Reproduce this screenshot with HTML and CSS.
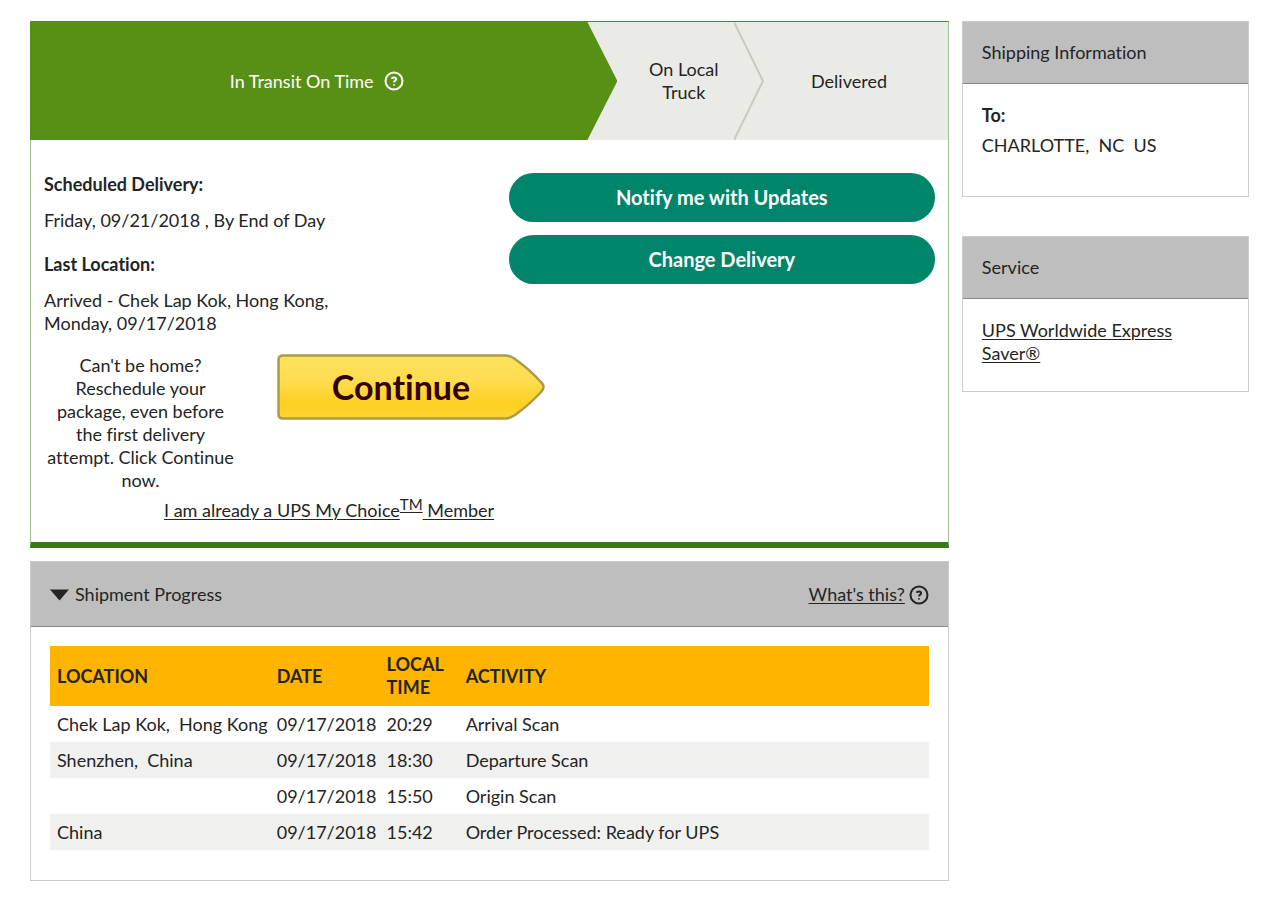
FILE: index.html
```html
<!DOCTYPE html>
<html lang="en">
<head>
<meta charset="utf-8">
<meta name="viewport" content="width=device-width, initial-scale=1">
<title>Tracking Detail</title>
<link rel="stylesheet" href="styles.css">
</head>
<body>
<div class="page">
  <main class="main">
    <section class="status">
      <ol class="steps">
        <li class="step step-current">
          <span>In Transit On Time</span>
          <button class="help" type="button" aria-label="Help with status">
            <svg class="help-icon" viewBox="0 0 20 20" aria-hidden="true"><circle cx="10" cy="10" r="8.5"/><path d="M7.7 7.8C8 6.2 12.1 6.1 12.1 8.2C12.1 9.7 10.1 9.6 10 11.4M10 13.2V14.4"/></svg>
          </button>
        </li>
        <li class="step">
          <span>On Local<br>Truck</span>
          <svg class="chevron" viewBox="0 0 30 118" preserveAspectRatio="none" aria-hidden="true"><path d="M-1 -2L29 59L-1 120"/></svg>
        </li>
        <li class="step step-last"><span>Delivered</span></li>
      </ol>
      <div class="status-body">
        <div class="summary">
          <dl class="details">
            <dt>Scheduled Delivery:</dt>
            <dd>Friday, 09/21/2018 , By End of Day</dd>
            <dt>Last Location:</dt>
            <dd>Arrived - Chek Lap Kok, Hong Kong,<br>Monday, 09/17/2018</dd>
          </dl>
          <div class="actions">
            <button class="pill" type="button">Notify me with Updates</button>
            <button class="pill" type="button">Change Delivery</button>
          </div>
        </div>
        <div class="promo">
          <div class="promo-row">
            <p class="promo-text">Can't be home? Reschedule your package, even before the first delivery attempt. Click Continue now.</p>
            <button class="continue" type="button">
              <svg class="continue-shape" viewBox="0 0 268 66" aria-hidden="true">
                <defs><linearGradient id="gold" x1="0" y1="0" x2="0" y2="1"><stop offset="0" stop-color="#ffe25c"/><stop offset=".4" stop-color="#ffdc50"/><stop offset=".75" stop-color="#ffd022"/><stop offset="1" stop-color="#ffd42e"/></linearGradient></defs>
                <path d="M6 1.5H228C232 1.5 235 3 238 5Q252 15 264 28Q269 33 264 38Q252 51 238 61C235 63 232 64.5 228 64.5H6Q1.5 64.5 1.5 60V6Q1.5 1.5 6 1.5Z" fill="url(#gold)" stroke="#ad9a49" stroke-width="2.5"/>
              </svg>
              <span class="continue-label">Continue</span>
            </button>
          </div>
          <a class="member" href="#">I am already a UPS My Choice<sup>TM</sup> Member</a>
        </div>
      </div>
    </section>

    <section class="card">
      <header class="card-head progress-head">
        <button class="toggle" type="button" aria-expanded="true">
          <svg class="caret" viewBox="0 0 19 12" aria-hidden="true"><path d="M0 0.5H19L9.5 11.5Z"/></svg>
          Shipment Progress
        </button>
        <a class="whats-this" href="#"><span>What's this?</span>
          <svg class="help-icon" viewBox="0 0 20 20" aria-hidden="true"><circle cx="10" cy="10" r="8.5"/><path d="M7.7 7.8C8 6.2 12.1 6.1 12.1 8.2C12.1 9.7 10.1 9.6 10 11.4M10 13.2V14.4"/></svg>
        </a>
      </header>
      <div class="progress-body">
        <table class="scans">
          <thead>
            <tr><th class="col-location" scope="col">LOCATION</th><th class="col-date" scope="col">DATE</th><th class="col-time" scope="col">LOCAL TIME</th><th scope="col">ACTIVITY</th></tr>
          </thead>
          <tbody>
            <tr><td>Chek Lap Kok,&nbsp; Hong Kong</td><td>09/17/2018</td><td>20:29</td><td>Arrival Scan</td></tr>
            <tr><td>Shenzhen,&nbsp; China</td><td>09/17/2018</td><td>18:30</td><td>Departure Scan</td></tr>
            <tr><td></td><td>09/17/2018</td><td>15:50</td><td>Origin Scan</td></tr>
            <tr><td>China</td><td>09/17/2018</td><td>15:42</td><td>Order Processed: Ready for UPS</td></tr>
          </tbody>
        </table>
      </div>
    </section>
  </main>

  <aside class="side">
    <section class="card">
      <h2 class="card-head">Shipping Information</h2>
      <div class="card-body ship-to">
        <strong>To:</strong>
        <p>CHARLOTTE,&nbsp; NC&nbsp; US</p>
      </div>
    </section>
    <section class="card">
      <h2 class="card-head">Service</h2>
      <div class="card-body"><a href="#">UPS Worldwide Express Saver®</a></div>
    </section>
  </aside>
</div>
</body>
</html>
```
FILE: styles.css
```css
* { box-sizing: border-box; }

body {
  margin: 0;
  background: #fff;
  color: #242424;
  font: 18px/23px Lato, "Open Sans", sans-serif;
  font-variant-ligatures: none;
}

p, h2, dl, dd, ol { margin: 0; padding: 0; }
button { font: inherit; font-variant-ligatures: none; color: inherit; background: none; border: 0; padding: 0; cursor: pointer; }
a { color: inherit; text-underline-offset: 2px; text-decoration-thickness: 1px; }

.page {
  display: grid;
  grid-template-columns: minmax(0, 16fr) minmax(0, 5fr);
  gap: 13px;
  align-items: start;
  padding: 21px 31px 21px 30px;
}

.main { display: grid; gap: 13px; }

.status { border: 1px solid #a3bf94; border-top-color: #4d8a2a; border-bottom: 6px solid #377a17; }

.steps { display: flex; min-height: 118px; margin-left: -1px; list-style: none; background: #eaebe6; }
.step {
  position: relative;
  display: flex;
  flex: 0 0 16%;
  align-items: center;
  justify-content: center;
  gap: 10px;
  padding-right: 14px;
  text-align: center;
}
.step-current {
  flex-basis: 64%;
  color: #fff;
  background: #589016;
  clip-path: polygon(0 0, calc(100% - 30px) 0, 100% 50%, calc(100% - 30px) 100%, 0 100%);
}
.step-last { flex-basis: 20%; }
.chevron { position: absolute; top: 0; right: 0; width: 30px; height: 100%; fill: none; stroke: #cbc8bf; stroke-width: 2; }

.help { display: flex; }
.help-icon { width: 20px; height: 20px; flex: none; fill: none; stroke: currentColor; stroke-width: 2; }

.status-body { padding: 33px 13px 20px; }
.summary { display: grid; grid-template-columns: minmax(0, 12fr) minmax(0, 11fr); }
.details dt { font-weight: bold; margin-bottom: 13px; }
.details dd + dt { margin-top: 21px; }

.actions { display: grid; gap: 13px; align-content: start; }
.pill { height: 49px; border-radius: 25px; background: #00846a; color: #fff; font-size: 20px; font-weight: bold; }

.promo { width: 64%; margin-top: 19px; text-align: center; }
.promo-row { display: flex; align-items: flex-start; gap: 40px; margin-bottom: 4px; }
.promo-text { flex: 0 0 193px; }
.continue { position: relative; width: 268px; height: 66px; }
.continue-shape { position: absolute; inset: 0; width: 100%; height: 100%; }
.continue-label { position: relative; padding-right: 20px; color: #330000; font-size: 34px; font-weight: bold; line-height: 40px; }
.member sup { display: inline-block; font-size: 15px; line-height: 16px; text-decoration: underline; text-decoration-thickness: 1px; }

.card { border: 1px solid #ccc; }
.card-head {
  padding: 19px;
  background: #bebebe;
  border-bottom: 1px solid #888;
  font-size: 18px;
  font-weight: normal;
}
.card-body { padding: 20px 19px 26px; }
.ship-to { padding-bottom: 39px; }
.ship-to strong { display: block; margin-bottom: 7px; }

.progress-head { display: flex; align-items: center; justify-content: space-between; padding: 21px 19px 20px; }
.toggle { display: flex; align-items: center; gap: 6px; }
.caret { width: 19px; height: 12px; fill: #242424; }
.whats-this { display: flex; align-items: center; gap: 4px; text-decoration: none; }
.whats-this span { text-decoration: underline; text-underline-offset: 2px; }

.progress-body { padding: 19px 19px 30px; }
.scans { width: 100%; border-collapse: collapse; table-layout: fixed; text-align: left; }
.scans th { padding: 7px; background: #ffb500; }
.scans td { height: 36px; padding: 0 7px; white-space: nowrap; }
.scans tbody tr:nth-child(even) { background: #f0f0ee; }
.col-location { width: 25%; }
.col-date { width: 12.5%; }
.col-time { width: 9%; }

.side { display: grid; gap: 39px; }
```
